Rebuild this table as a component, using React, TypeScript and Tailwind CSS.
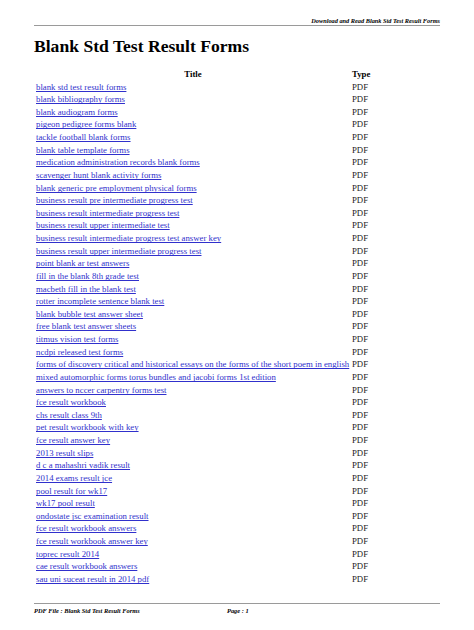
const rows = [
  "blank std test result forms",
  "blank bibliography forms",
  "blank audiogram forms",
  "pigeon pedigree forms blank",
  "tackle football blank forms",
  "blank table template forms",
  "medication administration records blank forms",
  "scavenger hunt blank activity forms",
  "blank generic pre employment physical forms",
  "business result pre intermediate progress test",
  "business result intermediate progress test",
  "business result upper intermediate test",
  "business result intermediate progress test answer key",
  "business result upper intermediate progress test",
  "point blank ar test answers",
  "fill in the blank 8th grade test",
  "macbeth fill in the blank test",
  "rotter incomplete sentence blank test",
  "blank bubble test answer sheet",
  "free blank test answer sheets",
  "titmus vision test forms",
  "ncdpi released test forms",
  "forms of discovery critical and historical essays on the forms of the short poem in english",
  "mixed automorphic forms torus bundles and jacobi forms 1st edition",
  "answers to nccer carpentry forms test",
  "fce result workbook",
  "chs result class 9th",
  "pet result workbook with key",
  "fce result answer key",
  "2013 result slips",
  "d c a mahashri vadik result",
  "2014 exams result jce",
  "pool result for wk17",
  "wk17 pool result",
  "ondostate jsc examination result",
  "fce result workbook answers",
  "fce result workbook answer key",
  "toprec result 2014",
  "cae result workbook answers",
  "sau uni suceat result in 2014 pdf",
];

export default function App() {
  return (
    <div className="w-[474px] h-[630px] bg-white text-black font-['Liberation_Serif',serif] px-[34px] flex flex-col">
      <div className="h-[26px] flex items-end justify-end border-b border-[#9a9a9a] pb-[1px]">
        <span className="text-[6.3px] italic font-bold leading-none">
          Download and Read Blank Std Test Result Forms
        </span>
      </div>
      <h1 className="text-[17.6px] font-bold leading-none mt-[12px]">
        Blank Std Test Result Forms
      </h1>
      <table className="mt-[12px] w-full border-collapse text-[8.75px]">
        <thead>
          <tr className="h-[13px]">
            <th className="w-[318px] text-center font-bold leading-none">Title</th>
            <th className="text-left font-bold leading-none">Type</th>
          </tr>
        </thead>
        <tbody>
          {rows.map((r) => (
            <tr key={r} className="h-[12.64px]">
              <td className="pl-[2px] leading-none whitespace-nowrap">
                <a
                  href="#"
                  className="text-[#3030cc] underline underline-offset-1 [text-decoration-skip-ink:none]"
                >
                  {r}
                </a>
              </td>
              <td className="leading-none text-[#222]">PDF</td>
            </tr>
          ))}
        </tbody>
      </table>
      <div className="mt-[17px] border-t border-[#9a9a9a] pt-[4px] flex text-[6.4px] italic font-bold leading-none">
        <span className="w-[193px]">PDF File : Blank Std Test Result Forms</span>
        <span>Page : 1</span>
      </div>
    </div>
  );
}
